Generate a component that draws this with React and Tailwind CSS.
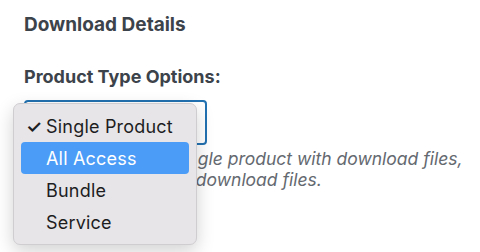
import React from 'react';

const options = ['Single Product', 'All Access', 'Bundle', 'Service'];

export default function App() {
  const selected = 'Single Product';
  const hovered = 'All Access';

  return (
    <div className="w-[480px] h-[252px] bg-white overflow-hidden pl-6 pt-[14px] font-['Inter',sans-serif]">
      <h2 className="text-[19px] leading-[22px] font-bold text-[#3c434a]">Download Details</h2>

      <div className="mt-[30px]">
        <label className="block text-[18px] leading-[22px] font-bold text-[#3c434a]">
          Product Type Options:
        </label>

        <div className="relative mt-[12px]">
          {/* select box (focused) */}
          <div className="w-[183px] h-[45px] border-2 border-[#2271b1] rounded-[4px] bg-white" />

          <p className="mt-[3px] whitespace-nowrap text-[17.5px] leading-[21px] italic text-[#646970]">
            Sell this item as a single product with download files,
            <br />
            or a bundle that has download files.
          </p>

          {/* open dropdown menu */}
          <div className="absolute left-[-11px] top-[3px] w-[184px] py-[6px] px-[7px] bg-[#e7e5e8] border border-[#cfcdd0] rounded-[7px] shadow-[0_6px_18px_rgba(0,0,0,0.18)]">
            {options.map((opt) => (
              <div
                key={opt}
                className={`h-8 flex items-center rounded-[4px] text-[18px] tracking-[0.2px] ${
                  opt === hovered ? 'bg-[#4a9cf7] text-white' : 'text-[#1d1d1f]'
                }`}
              >
                <span className="w-[25px] pl-[5px] text-[18px] font-semibold">{opt === selected ? '✓' : ''}</span>
                <span>{opt}</span>
              </div>
            ))}
          </div>
        </div>
      </div>
    </div>
  );
}
